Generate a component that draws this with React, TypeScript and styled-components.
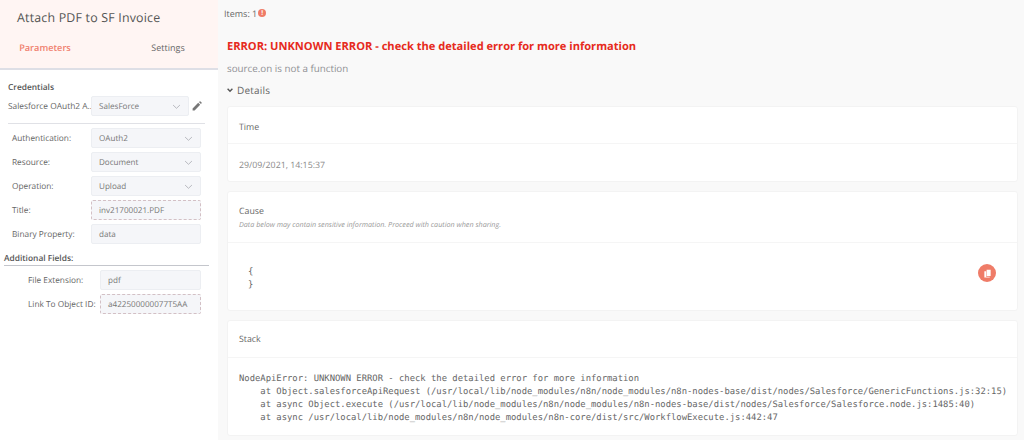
import React from "react";
import styled, { createGlobalStyle } from "styled-components";

const Global = createGlobalStyle`
  html, body { margin: 0; padding: 0; width: 1024px; height: 440px; overflow: hidden; background: #f9f9f9; }
  * { box-sizing: border-box; }
  #root { font-family: "Open Sans", sans-serif; color: #555; text-rendering: geometricPrecision; }
`;

const Page = styled.div`
  display: flex;
  width: 1024px;
  height: 440px;
  overflow: hidden;
`;

const Side = styled.aside`
  width: 218px;
  height: 440px;
  flex: none;
  background: #fff;
`;

const SideHead = styled.div`
  height: 70px;
  background: #fff5f3;
  display: flex;
  flex-direction: column;
`;

const NodeTitle = styled.div`
  height: 36px;
  padding: 9px 0 0 17px;
  font-size: 12.4px;
  line-height: 18px;
  color: #555;
  letter-spacing: 0.2px;
`;

const Tabs = styled.div`
  flex: 1;
  display: flex;
  overflow: hidden;
  border-bottom: 2px solid #dedfe6;
`;

const Tab = styled.div<{ $active?: boolean; $w: number }>`
  width: ${(p) => p.$w}px;
  flex: none;
  height: 34px;
  padding: 4px ${(p) => (p.$active ? 4 : 0)}px 0 0;
  text-align: center;
  font-size: ${(p) => (p.$active ? 9.2 : 9)}px;
  line-height: 16px;
  font-weight: ${(p) => (p.$active ? 600 : 400)};
  color: ${(p) => (p.$active ? "#f0806e" : "#666")};
  border-bottom: 2px solid ${(p) => (p.$active ? "#f0806e" : "transparent")};
`;

const SideBody = styled.div`
  padding: 12px 0 0 4px;
  display: flex;
  flex-direction: column;
`;

const Credentials = styled.div`
  padding-left: 4px;
  font-size: 8.4px;
  font-weight: 600;
  line-height: 12px;
  color: #555;
`;

const CredRow = styled.div`
  display: flex;
  align-items: center;
  margin: 2px 0 0 4px;
  height: 20px;
`;

const CredLabel = styled.div`
  width: 83px;
  flex: none;
  font-size: 8.4px;
  color: #666;
  white-space: nowrap;
`;

const Pencil = styled.span`
  display: flex;
  margin-left: 3px;
  width: 10px;
`;

const Rule = styled.div<{ $inset: number; $w: number; $gap: number; $dark?: boolean }>`
  height: 1px;
  width: ${(p) => p.$w}px;
  margin: ${(p) => p.$gap}px 0 0 ${(p) => p.$inset}px;
  background: ${(p) => (p.$dark ? "#c4c6cc" : "#e0e1e6")};
`;

const Fields = styled.div<{ $top: number }>`
  display: flex;
  flex-direction: column;
  gap: 4px;
  margin: ${(p) => p.$top}px 0 0 8px;
`;

const Field = styled.div<{ $label: number }>`
  display: flex;
  align-items: center;
  height: 20px;
  padding-left: ${(p) => p.$label}px;
`;

const FieldLabel = styled.div<{ $w: number }>`
  width: ${(p) => p.$w}px;
  flex: none;
  font-size: 8.3px;
  color: #666;
  white-space: nowrap;
`;

const Control = styled.div<{ $w: number; $expr?: boolean }>`
  width: ${(p) => p.$w}px;
  height: 20px;
  flex: none;
  display: flex;
  align-items: center;
  justify-content: space-between;
  padding: 0 7px 0 7px;
  font-size: 8.1px;
  color: #777;
  white-space: nowrap;
  background: #f5f6f9;
  border-radius: 2px;
  border: 1px ${(p) => (p.$expr ? "dashed #d3c0c5" : "solid #eceef2")};
`;

const AdditionalTitle = styled.div`
  font-size: 8.4px;
  font-weight: 600;
  line-height: 12px;
  margin-top: 9px;
  color: #555;
`;

const Main = styled.main`
  flex: 1;
  padding: 0 6px 0 9px;
  min-width: 0;
`;

const Items = styled.div`
  display: flex;
  align-items: center;
  gap: 1px;
  margin-left: -3px;
  height: 14px;
  margin-top: 6px;
  font-size: 9px;
  color: #666;
`;

const Badge = styled.span`
  display: inline-flex;
  align-items: center;
  justify-content: center;
  width: 8px;
  height: 8px;
  border-radius: 50%;
  background: #ef7c68;
  color: #fff;
  font-size: 6.5px;
  font-weight: 700;
  line-height: 8px;
`;

const ErrorTitle = styled.h1`
  margin: 19px 0 0;
  font-size: 11.1px;
  line-height: 16px;
  font-weight: 700;
  color: #e62a20;
  white-space: nowrap;
`;

const ErrorMessage = styled.div`
  margin-top: 7px;
  font-size: 9.8px;
  line-height: 14px;
  color: #8f9094;
`;

const DetailsHead = styled.div`
  display: flex;
  align-items: center;
  gap: 4px;
  height: 16px;
  margin-top: 6px;
  font-size: 10px;
  font-weight: 500;
  color: #666;
  letter-spacing: 0.2px;
`;

const Card = styled.section<{ $h: number; $gap: number }>`
  height: ${(p) => p.$h}px;
  margin-top: ${(p) => p.$gap}px;
  background: #fff;
  border-radius: 3px;
  border: 1px solid #f3f3f3;
  overflow: hidden;
  display: flex;
  flex-direction: column;
`;

const CardHead = styled.header<{ $h: number; $top: number }>`
  height: ${(p) => p.$h}px;
  flex: none;
  padding: ${(p) => p.$top}px 11px 0;
  display: flex;
  flex-direction: column;
  border-bottom: 1px solid #f5f5f5;
`;

const CardTitle = styled.div`
  font-size: 8.8px;
  line-height: 14px;
  color: #666;
`;

const CardNote = styled.div`
  margin-top: 2px;
  font-size: 7.2px;
  line-height: 11px;
  font-style: italic;
  color: #9a9a9a;
`;

const CardBody = styled.div`
  flex: 1;
  position: relative;
  padding: 0 11px;
`;

const TimeValue = styled.div`
  padding-top: 14px;
  font-size: 8.8px;
  line-height: 14px;
  color: #8a8a8a;
`;

const Code = styled.pre<{ $top: number; $left: number }>`
  margin: 0;
  padding: ${(p) => p.$top}px 0 0 ${(p) => p.$left}px;
  font-family: "DejaVu Sans Mono", monospace;
  font-size: 8.87px;
  line-height: 13px;
  color: #666;
`;

const CopyButton = styled.button`
  position: absolute;
  right: 21px;
  top: 21px;
  width: 18px;
  height: 18px;
  padding: 0;
  border: 0;
  border-radius: 50%;
  background: #ef7c68;
  display: flex;
  align-items: center;
  justify-content: center;
`;

const Chevron = ({ w = 9 }: { w?: number }) => (
  <svg width={w} height={w} viewBox="0 0 10 10" fill="none" stroke="#a9abb2" strokeWidth="0.9">
    <path d="M1.2 3.4 5 7l3.8-3.6" />
  </svg>
);

const Select = ({ w, text }: { w: number; text: string }) => (
  <Control $w={w}>
    {text}
    <Chevron />
  </Control>
);

const stack = `NodeApiError: UNKNOWN ERROR - check the detailed error for more information
    at Object.salesforceApiRequest (/usr/local/lib/node_modules/n8n/node_modules/n8n-nodes-base/dist/nodes/Salesforce/GenericFunctions.js:32:15)
    at async Object.execute (/usr/local/lib/node_modules/n8n/node_modules/n8n-nodes-base/dist/nodes/Salesforce/Salesforce.node.js:1485:40)
    at async /usr/local/lib/node_modules/n8n/node_modules/n8n-core/dist/src/WorkflowExecute.js:442:47`;

export default function App() {
  return (
    <Page>
      <Global />
      <Side>
        <SideHead>
          <NodeTitle>Attach PDF to SF Invoice</NodeTitle>
          <Tabs>
            <Tab $active $w={94}>Parameters</Tab>
            <Tab $w={148}>Settings</Tab>
          </Tabs>
        </SideHead>
        <SideBody>
          <Credentials>Credentials</Credentials>
          <CredRow>
            <CredLabel>Salesforce OAuth2 A...</CredLabel>
            <Select w={98} text="SalesForce" />
            <Pencil>
              <svg width="10" height="10" viewBox="0 0 10 10" fill="#777">
                <path d="M0.6 7.4 6.2 1.8 8.2 3.8 2.6 9.4H0.6zM6.9 1.1 7.7 0.4a.6.6 0 0 1 .8 0l1.1 1.1a.6.6 0 0 1 0 .8L8.9 3.1z" />
              </svg>
            </Pencil>
          </CredRow>
          <Rule $inset={4} $w={197} $gap={7} />
          <Fields $top={4}>
            <Field $label={0}><FieldLabel $w={79}>Authentication:</FieldLabel><Select w={110} text="OAuth2" /></Field>
            <Field $label={0}><FieldLabel $w={79}>Resource:</FieldLabel><Select w={110} text="Document" /></Field>
            <Field $label={0}><FieldLabel $w={79}>Operation:</FieldLabel><Select w={110} text="Upload" /></Field>
            <Field $label={0}><FieldLabel $w={79}>Title:</FieldLabel><Control $w={110} $expr>inv21700021.PDF</Control></Field>
            <Field $label={0}><FieldLabel $w={79}>Binary Property:</FieldLabel><Control $w={110}>data</Control></Field>
          </Fields>
          <AdditionalTitle>Additional Fields:</AdditionalTitle>
          <Rule $inset={0} $w={205} $gap={0} $dark />
          <Fields $top={4}>
            <Field $label={16}><FieldLabel $w={72}>File Extension:</FieldLabel><Control $w={101}>pdf</Control></Field>
            <Field $label={16}><FieldLabel $w={72}>Link To Object ID:</FieldLabel><Control $w={101} $expr>a422500000077T5AA</Control></Field>
          </Fields>
        </SideBody>
      </Side>
      <Main>
        <Items>
          Items: 1<Badge>!</Badge>
        </Items>
        <ErrorTitle>ERROR: UNKNOWN ERROR - check the detailed error for more information</ErrorTitle>
        <ErrorMessage>source.on is not a function</ErrorMessage>
        <DetailsHead>
          <svg width="6" height="6" viewBox="0 0 10 10" fill="none" stroke="#555" strokeWidth="2.4">
            <path d="M1 3l4 4 4-4" />
          </svg>
          Details
        </DetailsHead>
        <Card $h={76} $gap={8}>
          <CardHead $h={37} $top={13}><CardTitle>Time</CardTitle></CardHead>
          <CardBody><TimeValue>29/09/2021, 14:15:37</TimeValue></CardBody>
        </Card>
        <Card $h={120} $gap={9}>
          <CardHead $h={51} $top={12}>
            <CardTitle>Cause</CardTitle>
            <CardNote>Data below may contain sensitive information. Proceed with caution when sharing.</CardNote>
          </CardHead>
          <CardBody>
            <Code $top={23} $left={9}>{"{\n}"}</Code>
            <CopyButton aria-label="Copy">
              <svg width="9" height="9" viewBox="0 0 10 10" fill="#fff">
                <path d="M1.5 2.5h2v6h4v1h-6zM4 .8h4.5v7H4z" />
              </svg>
            </CopyButton>
          </CardBody>
        </Card>
        <Card $h={116} $gap={9}>
          <CardHead $h={37} $top={11}><CardTitle>Stack</CardTitle></CardHead>
          <CardBody><Code $top={15} $left={0}>{stack}</Code></CardBody>
        </Card>
      </Main>
    </Page>
  );
}
